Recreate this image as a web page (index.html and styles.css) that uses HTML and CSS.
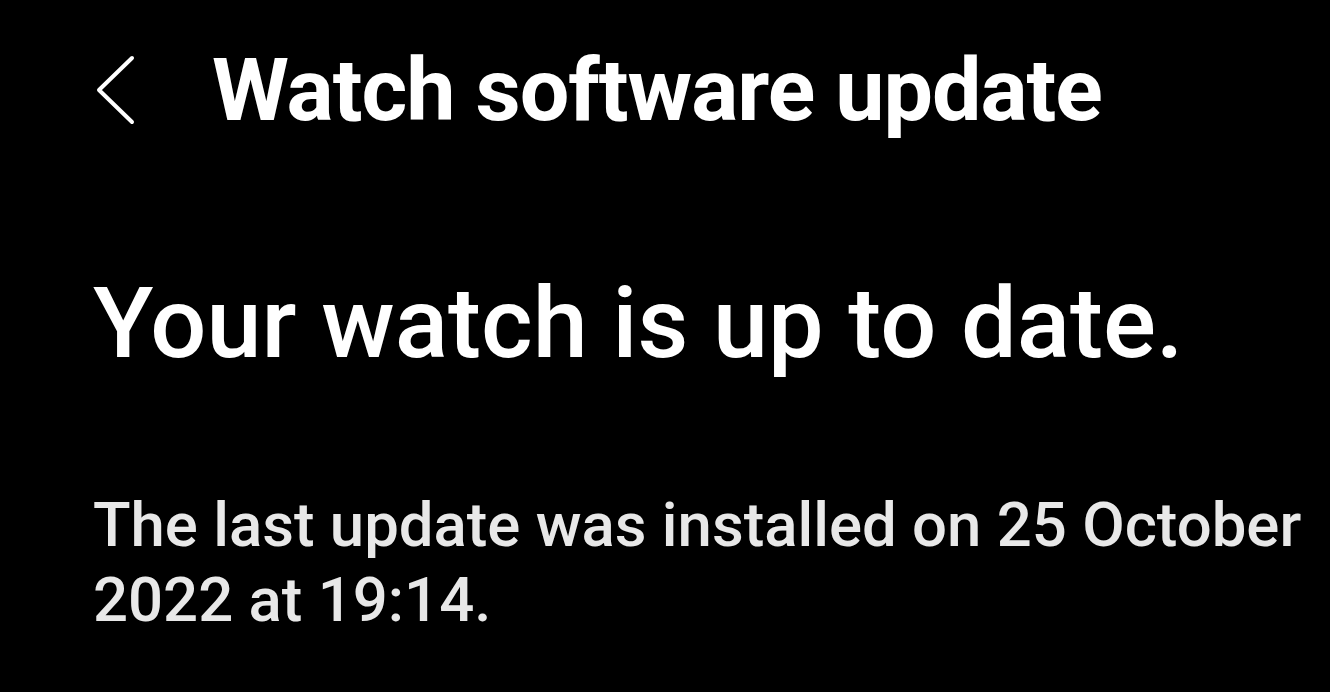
FILE: index.html
```html
<!DOCTYPE html>
<html>
<head>
    <title>Watch software update</title>
    <meta charset="UTF-8">
    <link rel="stylesheet" href="styles.css">
</head>
<body>
    <div class="screen">
        <div class="header">
            <button class="back" aria-label="Back">
                <svg width="40" height="70" viewBox="0 0 40 70">
                    <polyline points="36,3 3,35 36,67" fill="none" stroke="#ffffff" stroke-width="4" stroke-linecap="round" stroke-linejoin="round"/>
                </svg>
            </button>
            <h1 class="title">Watch software update</h1>
        </div>

        <h2 class="status">Your watch is up to date.</h2>

        <p class="details">The last update was installed on 25 October 2022 at 19:14.</p>
    </div>
</body>
</html>
```

FILE: styles.css
```css
body {
    margin: 0;
    background: #000000;
    color: #ffffff;
    font-family: Roboto, 'Noto Sans', sans-serif;
}
.screen {
    padding: 50px 0 0 93px;
}
.header {
    display: flex;
    align-items: center;
    gap: 76px;
}
.back {
    display: flex;
    padding: 0;
    margin-left: 3px;
    border: none;
    background: none;
}
.title {
    margin: 0;
    font-size: 88px;
    font-weight: 700;
    letter-spacing: -1px;
    line-height: 80px;
}
.status {
    margin: 143px 0 0;
    font-size: 99px;
    font-weight: 500;
    line-height: 100px;
}
.details {
    margin: 115px 0 0;
    max-width: 1230px;
    font-size: 61.7px;
    font-weight: 500;
    line-height: 75px;
    color: #e8e8e8;
}
```
